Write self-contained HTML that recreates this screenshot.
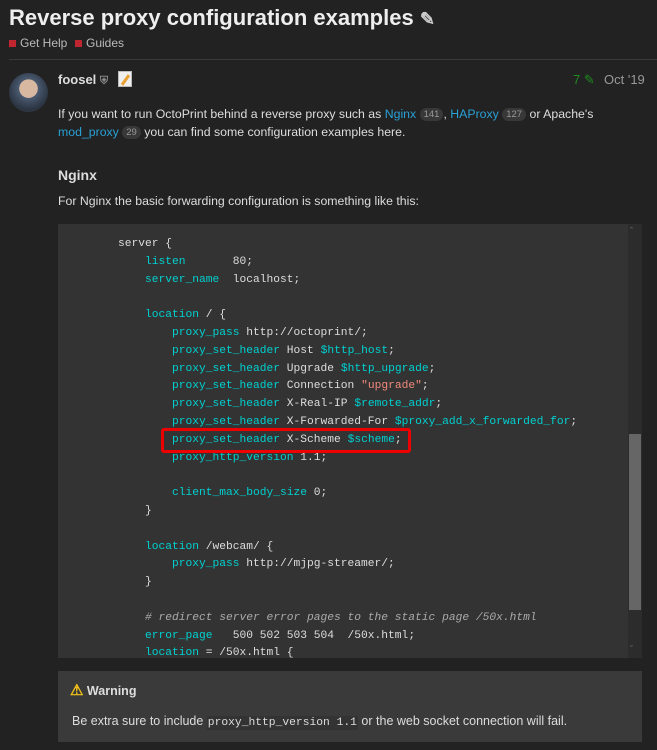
<!DOCTYPE html>
<html><head><meta charset="utf-8"><style>
*{margin:0;padding:0;box-sizing:border-box}
body{width:657px;height:750px;background:#222;color:#ddd;font-family:"Liberation Sans",Arial,sans-serif;overflow:hidden;position:relative}
.a{position:absolute}
h1{position:absolute;left:9px;top:5px;font-size:22px;font-weight:bold;color:#eee;white-space:nowrap}
.cat{font-size:12px;color:#bbb;top:36px}
.sq{display:inline-block;width:7px;height:7px;background:#c0262f;margin-right:4px;vertical-align:0}
.hr{left:9px;right:0;top:59px;height:1px;background:#3a3a3a}
.p{font-size:12.3px;color:#ddd;line-height:18px}
.lk{color:#29a0d6}
.bd{display:inline-block;background:#383838;color:#999;font-size:9.5px;border-radius:8px;padding:0 4px;line-height:13px;vertical-align:1px}
.code{left:58px;top:224px;width:584px;height:434px;background:#333;overflow:hidden}
pre{position:absolute;left:60px;top:12px;font-family:"Liberation Mono",monospace;font-size:11.25px;line-height:17.8px;color:#ddd}
.k{color:#00d1d1}.v{color:#00d1d1}.s{color:#f08a7a}.c{color:#aaa;font-style:italic}
.sb{left:628px;top:224px;width:14px;height:434px;background:#2c2c2c}
.th{left:629px;top:434px;width:12px;height:176px;background:#666}
.warn{left:58px;top:671px;width:584px;height:71px;background:#3a3a3a}
code.i{font-family:"Liberation Mono",monospace;font-size:11.3px;background:#333;color:#ddd;padding:1px 1px}
</style></head><body>
<h1>Reverse proxy configuration examples <span style="font-size:18px;color:#ccc">&#9998;</span></h1>
<div class="a cat" style="left:9px"><span class="sq"></span>Get Help</div>
<div class="a cat" style="left:75px"><span class="sq"></span>Guides</div>
<div class="a hr"></div>
<div class="a" style="left:9px;top:73px;width:39px;height:39px;border-radius:50%;background:radial-gradient(circle at 50% 40%,#d8b8a0 0 30%,#4a5a70 31%,#2a3340 70%,#555 100%)"></div>
<div class="a" style="left:58px;top:72px;font-size:13px;font-weight:bold;color:#ddd">foosel <span style="color:#888;font-size:11px">&#9960;</span></div>
<div class="a" style="left:118px;top:71px;width:14px;height:16px;background:#eee;border:1px solid #bbb"><div style="position:absolute;left:5px;top:2px;width:3px;height:12px;background:#e8a030;transform:rotate(35deg)"></div></div>
<div class="a" style="left:573px;top:72px;font-size:13px;color:#1e8a1e">7 &#9998;</div>
<div class="a" style="left:604px;top:72px;font-size:13px;color:#999">Oct '19</div>
<div class="a p" style="left:58px;top:105px;width:580px">If you want to run OctoPrint behind a reverse proxy such as <span class="lk">Nginx</span> <span class="bd">141</span>, <span class="lk">HAProxy</span> <span class="bd">127</span> or Apache's<br><span class="lk">mod_proxy</span> <span class="bd">29</span> you can find some configuration examples here.</div>
<div class="a" style="left:58px;top:167px;font-size:14px;font-weight:bold;color:#ddd">Nginx</div>
<div class="a p" style="left:58px;top:192px">For Nginx the basic forwarding configuration is something like this:</div>
<div class="a code"><pre>server {
    <span class="k">listen</span>       80;
    <span class="k">server_name</span>  localhost;

    <span class="k">location</span> / {
        <span class="k">proxy_pass</span> http://octoprint/;
        <span class="k">proxy_set_header</span> Host <span class="v">$http_host</span>;
        <span class="k">proxy_set_header</span> Upgrade <span class="v">$http_upgrade</span>;
        <span class="k">proxy_set_header</span> Connection <span class="s">"upgrade"</span>;
        <span class="k">proxy_set_header</span> X-Real-IP <span class="v">$remote_addr</span>;
        <span class="k">proxy_set_header</span> X-Forwarded-For <span class="v">$proxy_add_x_forwarded_for</span>;
        <span class="k">proxy_set_header</span> X-Scheme <span class="v">$scheme</span>;
        <span class="k">proxy_http_version</span> 1.1;

        <span class="k">client_max_body_size</span> 0;
    }

    <span class="k">location</span> /webcam/ {
        <span class="k">proxy_pass</span> http://mjpg-streamer/;
    }

    <span class="c"># redirect server error pages to the static page /50x.html</span>
    <span class="k">error_page</span>   500 502 503 504  /50x.html;
    <span class="k">location</span> = /50x.html {
</pre>
<div class="a" style="left:103px;top:204px;width:250px;height:25px;border:3px solid #e00;border-radius:3px"></div>
</div>
<div class="a sb"></div>
<div class="a th"></div>
<div class="a" style="left:630px;top:226px;font-size:9px;color:#777">&#710;</div>
<div class="a" style="left:630px;top:644px;font-size:9px;color:#777">&#711;</div>
<div class="a warn">
<div class="a" style="left:12px;top:10px;font-size:12.5px;font-weight:bold;color:#ddd"><span style="color:#f5c518;font-size:15px">&#9888;</span> Warning</div>
<div class="a" style="left:14px;top:43px;font-size:12.5px;color:#ddd;white-space:nowrap">Be extra sure to include <code class="i">proxy_http_version 1.1</code> or the web socket connection will fail.</div>
</div>
</body></html>
